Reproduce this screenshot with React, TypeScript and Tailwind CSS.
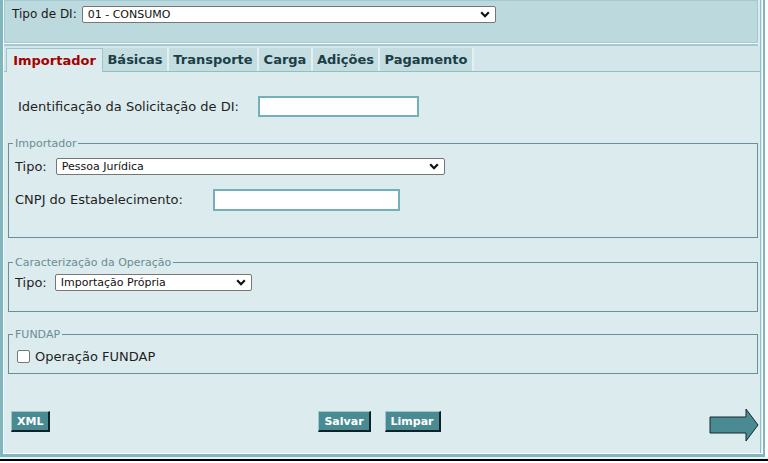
import React from "react";

const Chevron = () => (
  <svg width="10" height="7" viewBox="0 0 10 7" className="shrink-0">
    <path d="M1.2 1.3 L5 5.2 L8.8 1.3" fill="none" stroke="#111" strokeWidth="2.2" />
  </svg>
);

function FakeSelect({ value, className }: { value: string; className: string }) {
  return (
    <div
      className={
        "flex items-center justify-between bg-white border border-[#767676] rounded-[2px] pl-[5px] pr-[5px] text-[11px] leading-none text-[#111] " +
        className
      }
    >
      <span>{value}</span>
      <Chevron />
    </div>
  );
}

const tabs = [
  { label: "Básicas", cls: "w-[66px]" },
  { label: "Transporte", cls: "w-[90px]" },
  { label: "Carga", cls: "w-[54px]" },
  { label: "Adições", cls: "w-[67px]" },
  { label: "Pagamento", cls: "w-[94px]" },
];

function Btn({ children }: { children: React.ReactNode }) {
  return (
    <button className="h-[21px] px-[5px] bg-[#4a8b93] border-t border-l border-t-[#9cc7cd] border-l-[#9cc7cd] border-b-2 border-r-2 border-b-[#0f2326] border-r-[#0f2326] text-white text-[11px] font-bold leading-none">
      {children}
    </button>
  );
}

export default function App() {
  return (
    <div className="w-[768px] h-[463px] bg-white flex flex-col font-['DejaVu_Sans',Verdana,sans-serif] text-[#1f1f1f]">
      <div className="w-[765px] h-[457px] border-l-[3px] border-r-2 border-b-[3px] border-[#80b7bf] flex flex-col">
        <div className="flex-1 border-l border-r border-b border-white bg-[#dcebee] flex flex-col">
          <div className="w-[757px] flex-1 border-r border-[#8fc0c7] flex flex-col">
            {/* top panel */}
            <div className="w-[754px] flex flex-col">
              <div className="h-[43px] bg-[#bcd9dd] border border-[#a3cad0] flex items-start pt-[5px] pl-[7px] gap-[5px]">
                <span className="text-[12px] leading-[17px] text-[#1a1a1a]">Tipo de DI:</span>
                <FakeSelect value="01 - CONSUMO" className="w-[414px] h-[17px]" />
              </div>
              <div className="h-px bg-white" />
              <div className="h-[2px] bg-[#a1c9cf]" />
            </div>

            {/* tab strip */}
            <div className="h-[26px] bg-[#d3e7ea] border-b border-[#8fbfc6] flex items-end pl-[2px]">
              <div className="w-[97px] h-[24px] -mb-px bg-[#dcebee] border-l border-t border-r border-[#9cc6cc] flex items-center justify-center text-[13px] font-bold text-[#a30000]">
                Importador
              </div>
              {tabs.map((t) => (
                <div
                  key={t.label}
                  className={
                    "h-[23px] bg-[#c3dde1] border-r-2 border-[#e3eff1] flex items-center justify-center text-[13px] font-bold text-[#1c3e46] " +
                    t.cls
                  }
                >
                  {t.label}
                </div>
              ))}
            </div>

            {/* content */}
            <div className="flex flex-col">
              <div className="mt-[24px] pl-[14px] flex items-center gap-[19px]">
                <span className="text-[13px]">Identificação da Solicitação de DI:</span>
                <div className="w-[161px] h-[21px] bg-white border-2 border-[#74b0b8]" />
              </div>

              <fieldset className="mt-[20px] ml-[4px] w-[750px] border border-[#63929a] pl-[6px] pb-[26px]">
                <legend className="-ml-[2px] px-[2px] text-[11px] leading-[13px] text-[#6a8d92]">Importador</legend>
                <div className="mt-[7px] flex items-center gap-[9px]">
                  <span className="text-[13px]">Tipo:</span>
                  <FakeSelect value="Pessoa Jurídica" className="w-[389px] h-[17px]" />
                </div>
                <div className="mt-[12px] flex items-center">
                  <span className="w-[198px] text-[13px]">CNPJ do Estabelecimento:</span>
                  <div className="w-[187px] h-[22px] bg-white border-2 border-[#74b0b8]" />
                </div>
              </fieldset>

              <fieldset className="mt-[18px] ml-[4px] w-[750px] border border-[#63929a] pl-[6px] pb-[19px]">
                <legend className="-ml-[2px] px-[2px] text-[11px] leading-[13px] text-[#6a8d92]">Caracterização da Operação</legend>
                <div className="mt-[4px] flex items-center gap-[8px]">
                  <span className="text-[13px]">Tipo:</span>
                  <FakeSelect value="Importação Própria" className="w-[197px] h-[17px]" />
                </div>
              </fieldset>

              <fieldset className="mt-[16px] ml-[4px] w-[750px] border border-[#63929a] pl-[8px] pb-[10px]">
                <legend className="-ml-[4px] px-[2px] text-[11px] leading-[13px] text-[#6a8d92]">FUNDAP</legend>
                <div className="mt-[9px] flex items-center gap-[5px]">
                  <span className="w-[13px] h-[13px] bg-white border border-[#767676] rounded-[2px]" />
                  <span className="text-[13px] leading-[13px]">Operação FUNDAP</span>
                </div>
              </fieldset>

              <div className="mt-[34px] flex items-start pl-[7px] pr-[1px]">
                <div className="mt-[3px] flex">
                  <Btn>XML</Btn>
                </div>
                <div className="mt-[3px] ml-[268px] flex gap-[14px]">
                  <Btn>Salvar</Btn>
                  <Btn>Limpar</Btn>
                </div>
                <div className="ml-auto flex">
                  <svg width="50" height="34" viewBox="0 0 50 34">
                    <polygon
                      points="1,9 37,9 37,1 49,17 37,33 37,25 1,25"
                      fill="#4a8b93"
                      stroke="#14292c"
                      strokeWidth="1"
                    />
                  </svg>
                </div>
              </div>
            </div>
          </div>
        </div>
      </div>
      <div className="h-[2px] bg-[#e8f1f3]" />
      <div className="h-[2px] bg-black" />
    </div>
  );
}
